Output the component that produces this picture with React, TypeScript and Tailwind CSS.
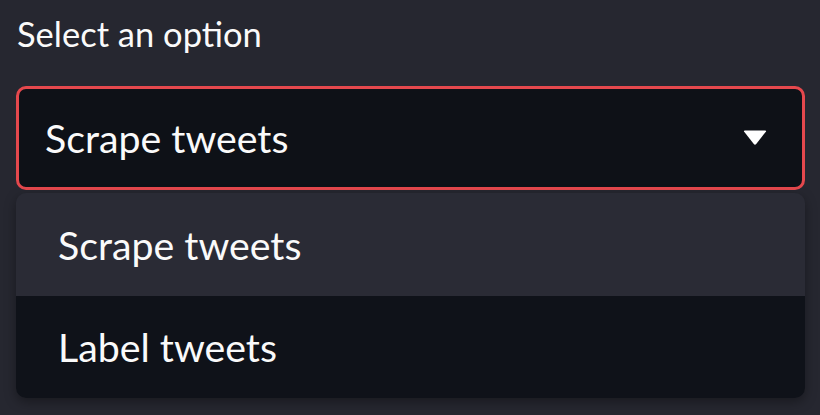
import React from "react";

export default function App() {
  const font = { fontFamily: "Lato, 'Noto Sans', sans-serif" };
  return (
    <div
      className="w-[820px] h-[415px] bg-[#262730] text-[#fafafa] pl-[16px] pr-[15px] pt-[14px] flex flex-col overflow-hidden"
      style={font}
    >
      <div className="text-[34.5px] leading-[40px] pl-[1px]">Select an option</div>
      <div className="mt-[32px] h-[104px] rounded-[10px] border-[3px] border-[#e5484d] bg-[#0e1117] flex items-center pl-[26px] pr-[35px]">
        <span className="text-[39.3px] leading-[48px] flex-1">Scrape tweets</span>
        <svg width="24" height="16" viewBox="0 0 24 16">
          <path d="M1 1.5 Q0.5 0.5 2 0.5 L22 0.5 Q23.5 0.5 23 1.5 L13.2 14 Q12 15.3 10.8 14 Z" fill="#ffffff" />
        </svg>
      </div>
      <div className="mt-[3px] rounded-[10px] overflow-hidden shadow-[0_4px_12px_rgba(0,0,0,0.35)]">
        <div className="h-[103px] bg-[#2a2b35] flex items-center pl-[42px] text-[39.3px] leading-[48px]">
          Scrape tweets
        </div>
        <div className="h-[102px] bg-[#0f1219] flex items-center pl-[42px] text-[39.3px] leading-[48px]">
          Label tweets
        </div>
      </div>
    </div>
  );
}
